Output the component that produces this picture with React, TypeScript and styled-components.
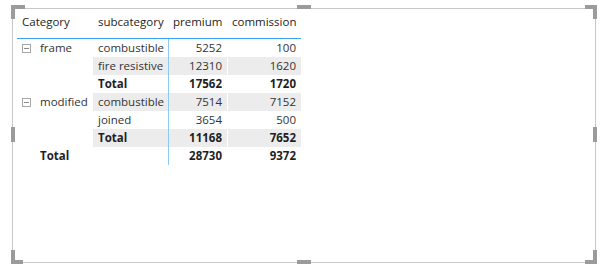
import React from "react";
import styled, { createGlobalStyle } from "styled-components";

const Global = createGlobalStyle`
  html, body { margin: 0; padding: 0; background: #ffffff; }
  body { font-family: "Open Sans", "Noto Sans", sans-serif; }
`;

const Page = styled.div`
  position: relative;
  width: 614px;
  height: 279px;
  overflow: hidden;
  background: #fff;
  padding: 8px 0 0 12px;
  box-sizing: border-box;
`;

const Toolbar = styled.div`
  position: absolute;
  left: 0;
  top: 0;
  width: 614px;
  height: 5px;
  overflow: hidden;
`;

const Frame = styled.div`
  position: relative;
  width: 584px;
  height: 255px;
  box-sizing: border-box;
  border: 1px solid #c8c8c8;
  padding: 0 0 0 4px;
`;

const Handle = styled.div<{ $x: string; $y: string; $w: number; $h: number }>`
  position: absolute;
  background: #9b9b9b;
  width: ${(p) => p.$w}px;
  height: ${(p) => p.$h}px;
  ${(p) => p.$x};
  ${(p) => p.$y};
`;

const Grid = styled.div`
  display: grid;
  grid-template-columns: 76px 75px 59px 74px;
  width: 284px;
  font-size: 11.5px;
  color: #333333;
`;

const HeadCell = styled.div<{ $right?: boolean }>`
  padding: 4px 5px 7px 5px;
  line-height: 18px;
  height: 18px;
  text-align: ${(p) => (p.$right ? "right" : "left")};
  border-bottom: 1px solid #3aa0f3;
  white-space: nowrap;
  color: #252423;
`;

const Cell = styled.div<{
  $right?: boolean;
  $band?: boolean;
  $bold?: boolean;
  $divider?: "blue" | "white";
  $pl?: number;
}>`
  height: 18px;
  line-height: 18px;
  padding: 0 5px 0 ${(p) => p.$pl ?? 5}px;
  background: ${(p) => (p.$band ? "#ececec" : "transparent")};
  font-weight: ${(p) => (p.$bold ? 700 : 400)};
  color: ${(p) => (p.$bold ? "#1f1f1f" : "#333333")};
  white-space: nowrap;
  border-left: ${(p) =>
    p.$divider === "blue"
      ? "1px solid #8ec8f6"
      : p.$divider === "white"
      ? "1px solid #ffffff"
      : "0"};
  display: flex;
  align-items: center;
  justify-content: ${(p) => (p.$right ? "flex-end" : "flex-start")};
  overflow: visible;
`;

const Expander = styled.span`
  flex: 0 0 auto;
  display: inline-block;
  position: relative;
  width: 7px;
  height: 7px;
  border: 1px solid #a6a6a6;
  margin: 0 9px 0 0;
  &::after {
    content: "";
    position: absolute;
    left: 1px;
    right: 1px;
    top: 3px;
    height: 1px;
    background: #8a8a8a;
  }
`;

type Row = {
  cat?: string;
  expand?: boolean;
  sub: string;
  p: string;
  c: string;
  band?: boolean;
  bold?: boolean;
  grand?: boolean;
};

const rows: Row[] = [
  { cat: "frame", expand: true, sub: "combustible", p: "5252", c: "100" },
  { sub: "fire resistive", p: "12310", c: "1620", band: true },
  { sub: "Total", p: "17562", c: "1720", bold: true },
  { cat: "modified", expand: true, sub: "combustible", p: "7514", c: "7152", band: true },
  { sub: "joined", p: "3654", c: "500" },
  { sub: "Total", p: "11168", c: "7652", bold: true, band: true },
  { cat: "Total", sub: "", p: "28730", c: "9372", bold: true, grand: true },
];

const ToolIcons = () => (
  <svg width="614" height="5" viewBox="0 0 614 5">
    <line x1="359.5" y1="0" x2="359.5" y2="3" stroke="#7a7a7a" strokeWidth="1" />
    <path d="M392 0 L395 3 L398 0" fill="none" stroke="#6a6a6a" strokeWidth="1.2" />
    <path d="M422 0 Q425 4 428 0 M430 0 Q433 4 436 0" fill="none" stroke="#bbbbbb" strokeWidth="1" />
    <path d="M457 0 Q460 4 463 0 M465 0 Q468 4 471 0" fill="none" stroke="#bbbbbb" strokeWidth="1" />
    <rect x="506.5" y="-3" width="3" height="5" fill="none" stroke="#8a8a8a" strokeWidth="1" />
    <rect x="535" y="0" width="19" height="1.5" fill="#8a8a8a" />
  </svg>
);

export default function App() {
  return (
    <Page>
      <Global />
      <Toolbar>
        <ToolIcons />
      </Toolbar>
      <Frame>
        <Handle $x="left: -2px" $y="top: -4px" $w={14} $h={4} />
        <Handle $x="left: -2px" $y="top: -4px" $w={4} $h={14} />
        <Handle $x="right: -2px" $y="top: -4px" $w={12} $h={4} />
        <Handle $x="right: -2px" $y="top: -4px" $w={4} $h={14} />
        <Handle $x="left: -2px" $y="bottom: -2px" $w={12} $h={4} />
        <Handle $x="left: -2px" $y="bottom: -2px" $w={4} $h={14} />
        <Handle $x="right: -2px" $y="bottom: -2px" $w={12} $h={4} />
        <Handle $x="right: -2px" $y="bottom: -2px" $w={4} $h={14} />
        <Handle $x="left: 284px" $y="top: -4px" $w={14} $h={4} />
        <Handle $x="left: 284px" $y="bottom: -2px" $w={14} $h={4} />
        <Handle $x="left: -2px" $y="top: 118px" $w={4} $h={15} />
        <Handle $x="right: -2px" $y="top: 118px" $w={4} $h={15} />
        <Grid>
          <HeadCell>Category</HeadCell>
          <HeadCell>subcategory</HeadCell>
          <HeadCell $right>premium</HeadCell>
          <HeadCell $right>commission</HeadCell>
          {rows.map((r, i) => (
            <React.Fragment key={i}>
              <Cell $bold={r.grand} $pl={r.grand ? 23 : 5}>
                {r.expand && <Expander />}
                {r.cat ?? ""}
              </Cell>
              <Cell $band={r.band} $bold={r.bold}>
                {r.sub}
              </Cell>
              <Cell $right $band={r.band} $bold={r.bold} $divider="blue">
                {r.p}
              </Cell>
              <Cell $right $band={r.band} $bold={r.bold} $divider="white">
                {r.c}
              </Cell>
            </React.Fragment>
          ))}
        </Grid>
      </Frame>
    </Page>
  );
}
